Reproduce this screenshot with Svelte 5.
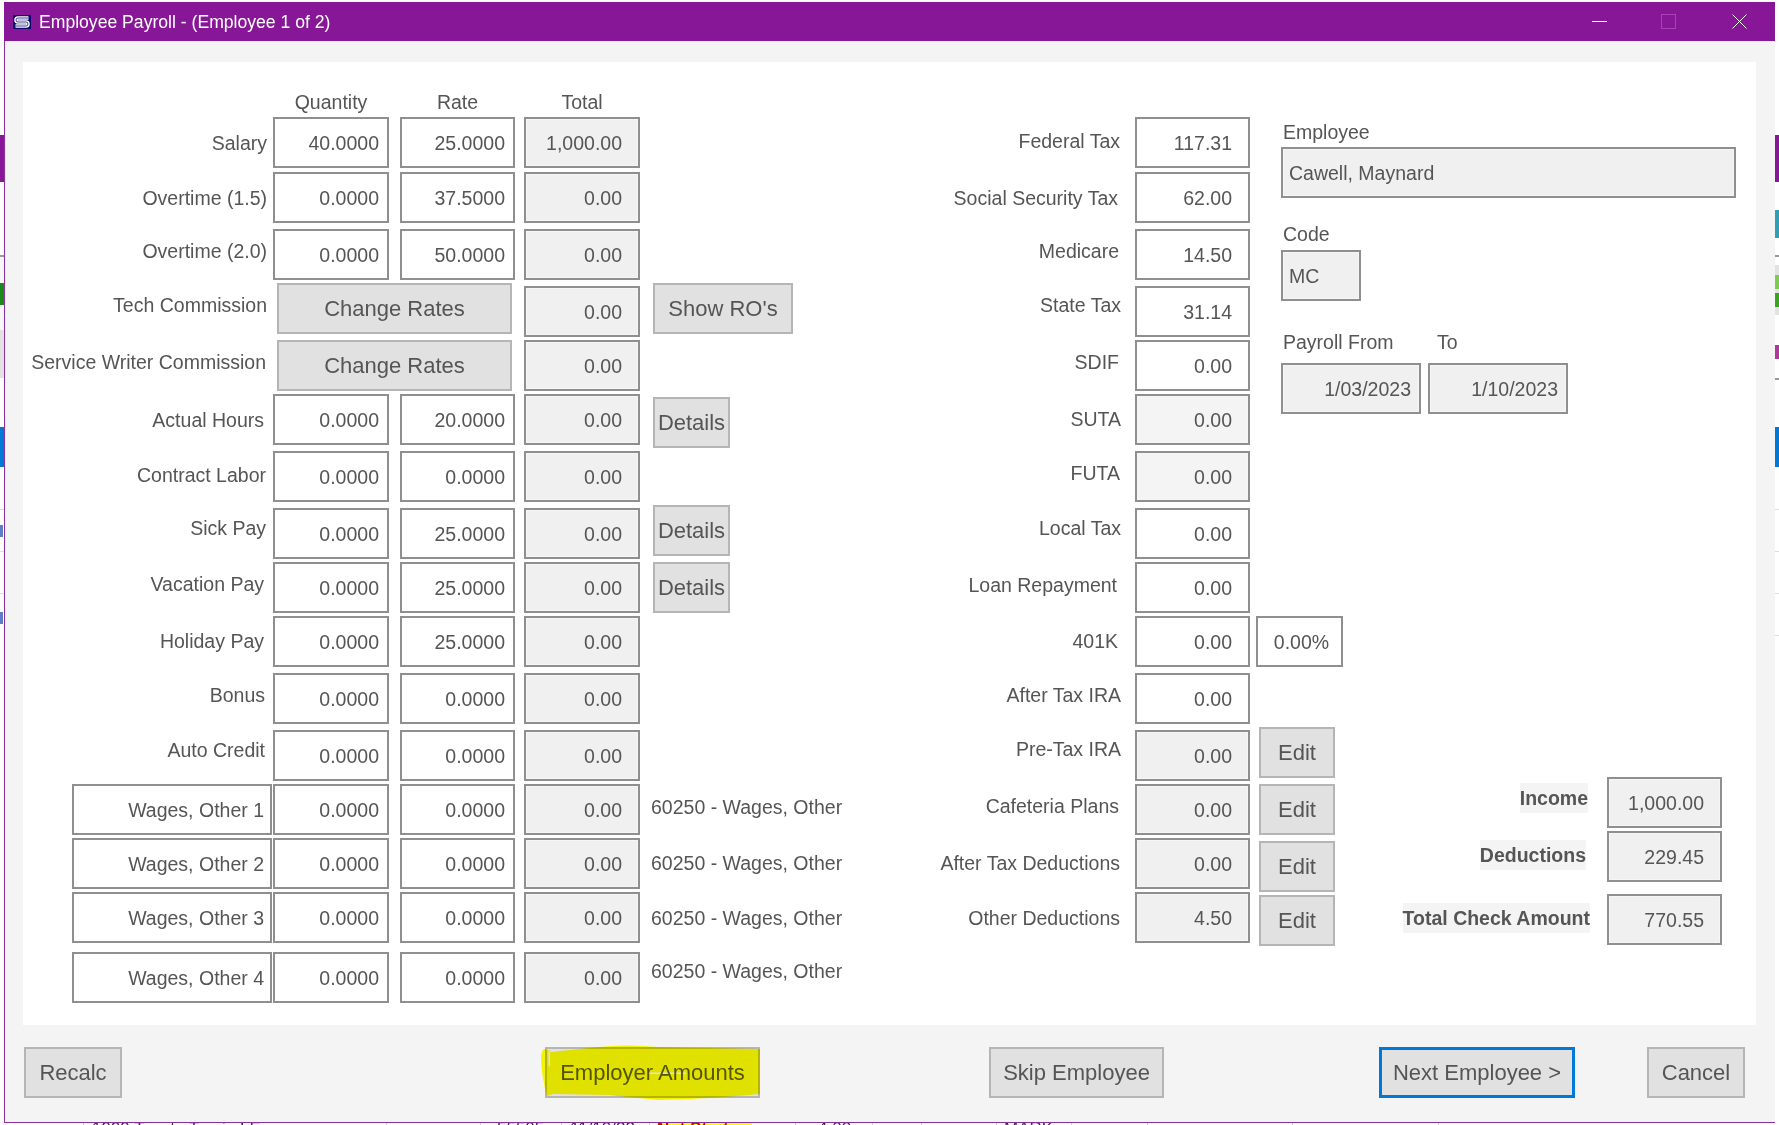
<script lang="ts">
  const payRows = [
    { label: "Salary", pr: 6, lift: 0, qty: "40.0000", rate: "25.0000", total: "1,000.00" },
    { label: "Overtime (1.5)", pr: 6, lift: 0, qty: "0.0000", rate: "37.5000", total: "0.00" },
    { label: "Overtime (2.0)", pr: 6, lift: 4, qty: "0.0000", rate: "50.0000", total: "0.00" },
    { label: "Tech Commission", pr: 6, lift: 7, change: "up", total: "0.00", extra: "Show RO's", extraClass: "ro-btn" },
    { label: "Service Writer Commission", pr: 7, lift: 4, change: "level", total: "0.00" },
    { label: "Actual Hours", pr: 9, lift: 0, qty: "0.0000", rate: "20.0000", total: "0.00", extra: "Details", extraClass: "details low" },
    { label: "Contract Labor", pr: 7, lift: 2, qty: "0.0000", rate: "0.0000", total: "0.00" },
    { label: "Sick Pay", pr: 7, lift: 6, qty: "0.0000", rate: "25.0000", total: "0.00", extra: "Details", extraClass: "details high" },
    { label: "Vacation Pay", pr: 9, lift: 4, qty: "0.0000", rate: "25.0000", total: "0.00", extra: "Details", extraClass: "details" },
    { label: "Holiday Pay", pr: 9, lift: 1, qty: "0.0000", rate: "25.0000", total: "0.00" },
    { label: "Bonus", pr: 8, lift: 4, qty: "0.0000", rate: "0.0000", total: "0.00" },
    { label: "Auto Credit", pr: 8, lift: 6, qty: "0.0000", rate: "0.0000", total: "0.00" },
    { wages: "Wages, Other 1", qty: "0.0000", rate: "0.0000", total: "0.00", account: 3 },
    { wages: "Wages, Other 2", qty: "0.0000", rate: "0.0000", total: "0.00", account: 1 },
    { wages: "Wages, Other 3", qty: "0.0000", rate: "0.0000", total: "0.00", account: 0 },
    { wages: "Wages, Other 4", qty: "0.0000", rate: "0.0000", total: "0.00", account: 7 },
  ];

  const dedRows = [
    { label: "Federal Tax", pr: 15, lift: 2, value: "117.31" },
    { label: "Social Security Tax", pr: 17, lift: 0, value: "62.00" },
    { label: "Medicare", pr: 16, lift: 4, value: "14.50" },
    { label: "State Tax", pr: 14, lift: 7, value: "31.14" },
    { label: "SDIF", pr: 16, lift: 4, value: "0.00" },
    { label: "SUTA", pr: 14, lift: 1, value: "0.00", cls: "ro light" },
    { label: "FUTA", pr: 15, lift: 4, value: "0.00", cls: "ro light" },
    { label: "Local Tax", pr: 14, lift: 6, value: "0.00" },
    { label: "Loan Repayment", pr: 18, lift: 3, value: "0.00" },
    { label: "401K", pr: 17, lift: 1, value: "0.00", pct: "0.00%" },
    { label: "After Tax IRA", pr: 14, lift: 4, value: "0.00" },
    { label: "Pre-Tax IRA", pr: 14, lift: 7, value: "0.00", cls: "ro", edit: "up" },
    { label: "Cafeteria Plans", pr: 16, lift: 4, value: "0.00", cls: "ro", edit: "" },
    { label: "After Tax Deductions", pr: 15, lift: 1, value: "0.00", cls: "ro", edit: "down" },
    { label: "Other Deductions", pr: 15, lift: 0, value: "4.50", cls: "ro", edit: "down" },
  ];

  // bits of the app window behind the dialog
  const under = [
    { x: 0, y: 135, w: 4, h: 47, c: "#881798" },
    { x: 0, y: 255, w: 4, h: 2, c: "#999" },
    { x: 0, y: 257, w: 4, h: 120, c: "#f7f7f7" },
    { x: 0, y: 283, w: 4, h: 22, c: "#1a8a1a" },
    { x: 0, y: 330, w: 4, h: 48, c: "#e2e2e2" },
    { x: 0, y: 427, w: 4, h: 40, c: "#0078d7" },
    { x: 0, y: 509, w: 4, h: 1, c: "#ddd" },
    { x: 0, y: 525, w: 3, h: 12, c: "#5a7fc8" },
    { x: 0, y: 551, w: 4, h: 1, c: "#ddd" },
    { x: 0, y: 593, w: 4, h: 1, c: "#ddd" },
    { x: 0, y: 612, w: 3, h: 12, c: "#5a7fc8" },
    { x: 1775, y: 135, w: 4, h: 47, c: "#881798" },
    { x: 1775, y: 210, w: 4, h: 28, c: "#2f9fb5" },
    { x: 1775, y: 255, w: 4, h: 2, c: "#999" },
    { x: 1775, y: 265, w: 4, h: 50, c: "#e2e2e2" },
    { x: 1775, y: 275, w: 4, h: 14, c: "#7ecb4f" },
    { x: 1775, y: 293, w: 4, h: 14, c: "#3aa51c" },
    { x: 1775, y: 345, w: 4, h: 14, c: "#b0389a" },
    { x: 1775, y: 378, w: 4, h: 2, c: "#999" },
    { x: 1775, y: 427, w: 4, h: 40, c: "#0078d7" },
    { x: 1775, y: 509, w: 4, h: 1, c: "#ddd" },
    { x: 1775, y: 551, w: 4, h: 1, c: "#ddd" },
    { x: 1775, y: 593, w: 4, h: 1, c: "#ddd" },
    { x: 1775, y: 635, w: 4, h: 1, c: "#ddd" },
  ];

  const tableLines = [83, 386, 480, 561, 649, 795, 872, 921, 996, 1071, 1147, 1292, 1438];
  const tableCells = [
    { x: 92, text: "1999 Toyota Trevia LE" },
    { x: 497, text: "55505" },
    { x: 570, text: "11/10/22" },
    { x: 818, text: "4.00" },
    { x: 1004, text: "MARK" },
  ];
</script>

<div class="under">
  {#each under as u}
    <i style="left:{u.x}px;top:{u.y}px;width:{u.w}px;height:{u.h}px;background:{u.c}"></i>
  {/each}
  {#each tableLines as x}
    <i style="left:{x}px;top:1123px;width:1px;height:2px;background:#ccc"></i>
  {/each}
  <i class="not-start-bg"></i>
  <div class="table-strip">
    {#each tableCells as cell}
      <span style="left:{cell.x}px">{cell.text}</span>
    {/each}
    <span class="not-start">Not Start</span>
  </div>
</div>

<div class="window">
  <header class="titlebar">
    <svg class="logo" width="18" height="14" viewBox="0 0 18 14">
      <rect width="18" height="14" fill="#0a0a6e" />
      <path d="M15.5 3H5a2 2 0 0 0 0 4h8a2 2 0 0 1 0 4H2.5" fill="none" stroke="#fff" stroke-width="3.6" />
      <path d="M15.5 3H5a2 2 0 0 0 0 4h8a2 2 0 0 1 0 4H2.5" fill="none" stroke="#0a0a6e" stroke-width="0.8" />
    </svg>
    <span class="title">Employee Payroll - (Employee 1 of 2)</span>
    <div class="controls">
      <svg width="15" height="15" viewBox="0 0 15 15"><path d="M0 7.5H15" stroke="#fff" stroke-width="1" /></svg>
      <svg class="max" width="15" height="15" viewBox="0 0 15 15"><rect x="0.5" y="0.5" width="14" height="14" fill="none" stroke="#a545b4" /></svg>
      <svg class="close" width="15" height="15" viewBox="0 0 15 15"><path d="M0.5 0.5L14.5 14.5M14.5 0.5L0.5 14.5" stroke="#fff" stroke-width="1" /></svg>
    </div>
  </header>

  <main class="panel">
    <section class="pay">
      <div></div>
      <div class="head">Quantity</div>
      <div class="head rate-head">Rate</div>
      <div class="head">Total</div>
      <div></div>

      {#each payRows as row}
        {#if row.wages}
          <div class="box wages">{row.wages}</div>
        {:else}
          <div class="label" style="padding:0 {row.pr}px {row.lift * 2}px 0">{row.label}</div>
        {/if}

        {#if row.change}
          <button class="btn change {row.change}">Change Rates</button>
        {:else}
          <div class="box qty">{row.qty}</div>
          <div class="box rate">{row.rate}</div>
        {/if}

        <div class="box ro total">{row.total}</div>

        {#if row.extra}
          <button class="btn {row.extraClass}">{row.extra}</button>
        {:else if row.account !== undefined}
          <div class="account" style="padding-bottom:{row.account * 2}px">60250 - Wages, Other</div>
        {:else}
          <div></div>
        {/if}
      {/each}
    </section>

    <section class="ded">
      <div></div>
      <div></div>
      <div></div>
      {#each dedRows as row}
        <div class="label" style="padding:0 {row.pr}px {row.lift * 2}px 0">{row.label}</div>
        <div class="box amount {row.cls ?? ''}">{row.value}</div>
        {#if row.pct}
          <div class="box pct">{row.pct}</div>
        {:else if row.edit !== undefined}
          <button class="btn edit {row.edit}">Edit</button>
        {:else}
          <div></div>
        {/if}
      {/each}
    </section>

    <section class="side">
      <div class="cap first">Employee</div>
      <div class="box ro employee">Cawell, Maynard</div>
      <div class="cap code-cap">Code</div>
      <div class="box ro code">MC</div>
      <div class="dates-cap">
        <span class="cap from-cap">Payroll From</span>
        <span class="cap">To</span>
      </div>
      <div class="dates">
        <div class="box ro date">1/03/2023</div>
        <div class="box ro date">1/10/2023</div>
      </div>

      <div class="summary">
        <div class="sum-label income"><span>Income</span></div>
        <div class="box ro sum">1,000.00</div>
        <div class="sum-label deductions"><span>Deductions</span></div>
        <div class="box ro sum">229.45</div>
        <div class="sum-label check"><span>Total Check Amount</span></div>
        <div class="box ro sum">770.55</div>
      </div>
    </section>
  </main>

  <footer class="actions">
    <button class="btn recalc">Recalc</button>
    <div class="marked">
      <button class="btn employer">Employer Amounts</button>
      <svg class="marker" width="222" height="57" viewBox="0 0 222 57">
        <path
          fill="#ffff00"
          fill-rule="evenodd"
          d="M2 12Q3 4 7 5L12 8Q40 5 60 3Q85 0 120 3L221 5L221 50Q170 55 120 56Q100 54 70 51L14 50L8 52Q2 30 2 12ZM110 28.5L147 28.5L147 30L110 30ZM9.5 6L11 6L11 22L9.5 22Z"
        />
      </svg>
    </div>
    <button class="btn skip">Skip Employee</button>
    <button class="btn next">Next Employee &gt;</button>
    <button class="btn cancel">Cancel</button>
  </footer>
</div>

<style>
  :global(body) {
    background: #fff;
    overflow: hidden;
  }

  .under {
    position: absolute;
    inset: 0;
    width: 1779px;
    height: 1125px;
    overflow: hidden;
  }

  .under i {
    position: absolute;
    display: block;
  }

  .under .not-start-bg {
    left: 657px;
    top: 1123px;
    width: 95px;
    height: 2px;
    background: #ffff00;
  }

  .table-strip {
    position: absolute;
    left: 0;
    top: 1123px;
    width: 1779px;
    height: 2px;
    overflow: hidden;
    font: 17px/17px "Liberation Sans", Arial, sans-serif;
    color: #333;
  }

  .table-strip span {
    position: absolute;
    top: -3px;
    white-space: nowrap;
  }

  .table-strip .not-start {
    left: 657px;
    font-weight: bold;
    color: #c00;
  }

  .window {
    position: relative;
    box-sizing: border-box;
    width: 1771px;
    height: 1121px;
    margin: 2px 4px 0;
    background: #f4f4f4;
    border-left: 1px solid #8c2f9c;
    border-bottom: 1px solid #8c2f9c;
    font: 19.5px/22px "Liberation Sans", Arial, sans-serif;
    color: #555;
  }

  .titlebar {
    display: flex;
    align-items: center;
    height: 39px;
    margin-left: -1px;
    padding-left: 9px;
    background: #881798;
    color: #fff;
  }

  .logo {
    flex: none;
  }

  .title {
    margin-left: 8px;
    font-size: 17.6px;
  }

  .controls {
    display: flex;
    margin-left: auto;
    margin-right: 28px;
  }

  .controls .max {
    margin-left: 54px;
  }

  .controls .close {
    margin-left: 56px;
  }

  .panel {
    display: flex;
    height: 963px;
    margin: 21px 19px 0 18px;
    background: #fff;
  }

  .pay,
  .ded {
    display: grid;
    flex: none;
    grid-template-rows: 31px 55px 57px 57px 54px 54px 57px 57px 54px 54px 57px 57px 54px 54px 54px 60px 51px;
    padding-top: 24px;
    align-content: start;
  }

  .pay {
    grid-template-columns: 250px 127px 124px 129px 197px;
    width: 827px;
  }

  .ded {
    grid-template-columns: 285px 115px 31px;
    width: 431px;
  }

  .head {
    width: 116px;
    text-align: center;
    padding-top: 5px;
  }

  .rate-head {
    width: 115px;
  }

  .label {
    box-sizing: border-box;
    display: flex;
    align-items: center;
    justify-content: flex-end;
    height: 51px;
    white-space: nowrap;
  }

  .box {
    box-sizing: border-box;
    display: flex;
    align-items: center;
    justify-content: flex-end;
    height: 51px;
    border: 2px solid #8f8f8f;
    background: #fff;
    padding-right: 8px;
    white-space: nowrap;
  }

  .ro {
    background: #f0f0f0;
    box-shadow: inset 0 0 0 1px #f6f6f6;
  }

  .ro.light {
    background: #f4f4f4;
  }

  .qty,
  .total {
    width: 116px;
  }

  .rate {
    width: 115px;
  }

  .total {
    padding-right: 16px;
  }

  .wages {
    width: 200px;
    margin-left: 49px;
    padding-right: 6px;
  }

  .account {
    display: flex;
    align-items: center;
    box-sizing: border-box;
    height: 51px;
    margin-left: -2px;
    white-space: nowrap;
  }

  .amount {
    width: 115px;
    padding-right: 16px;
  }

  .pct {
    width: 87px;
    margin-left: 6px;
    justify-content: center;
    padding: 0 0 0 4px;
  }

  .btn {
    box-sizing: border-box;
    height: 51px;
    padding: 0;
    border: 2px solid #b5b5b5;
    background: #e1e1e1;
    color: #555;
    font: 22px/24px "Liberation Sans", Arial, sans-serif;
    white-space: nowrap;
  }

  .change {
    grid-column: span 2;
    width: 235px;
    margin-left: 4px;
  }

  .change.up {
    margin-top: -3px;
  }

  .ro-btn {
    width: 140px;
    margin-top: -3px;
  }

  .details {
    width: 77px;
  }

  .details.low {
    margin-top: 3px;
  }

  .details.high {
    margin-top: -3px;
  }

  .edit {
    width: 76px;
    margin-left: 9px;
  }

  .edit.up {
    margin-top: -3px;
  }

  .edit.down {
    margin-top: 3px;
  }

  .side {
    display: flex;
    flex: 1;
    flex-direction: column;
    padding-top: 59px;
  }

  .cap {
    padding-left: 2px;
  }

  .employee {
    justify-content: flex-start;
    width: 455px;
    margin-top: 4px;
    padding-left: 6px;
  }

  .code-cap {
    margin-top: 25px;
  }

  .code {
    justify-content: flex-start;
    width: 80px;
    margin-top: 5px;
    padding-left: 6px;
  }

  .dates-cap {
    display: flex;
    margin-top: 30px;
  }

  .from-cap {
    width: 152px;
  }

  .dates {
    display: flex;
    gap: 7px;
    margin-top: 10px;
  }

  .date {
    width: 140px;
  }

  .summary {
    display: grid;
    grid-template-columns: 326px 115px;
    grid-template-rows: 54px 63px 51px;
    margin-top: auto;
    margin-bottom: 80px;
  }

  .sum-label {
    display: flex;
    align-items: center;
    justify-content: flex-end;
    height: 51px;
    font-weight: bold;
  }

  .sum-label span {
    display: flex;
    align-items: center;
    height: 30px;
    background: #f4f4f4;
  }

  .income {
    padding: 0 19px 10px 0;
    box-sizing: border-box;
  }

  .deductions {
    padding: 0 21px 4px 0;
    box-sizing: border-box;
  }

  .check {
    padding: 0 17px 4px 0;
    box-sizing: border-box;
  }

  .sum {
    width: 115px;
    padding-right: 16px;
  }

  .actions {
    display: flex;
    padding: 22px 0 0 19px;
  }

  .recalc {
    width: 98px;
  }

  .marked {
    position: relative;
    margin-left: 423px;
  }

  .employer {
    display: block;
    width: 215px;
  }

  .marker {
    position: absolute;
    left: -6px;
    top: -3px;
    mix-blend-mode: multiply;
  }

  .skip {
    width: 175px;
    margin-left: 229px;
  }

  .next {
    width: 196px;
    margin-left: 215px;
    border: 3px solid #0078d7;
  }

  .cancel {
    width: 98px;
    margin-left: 72px;
  }
</style>
